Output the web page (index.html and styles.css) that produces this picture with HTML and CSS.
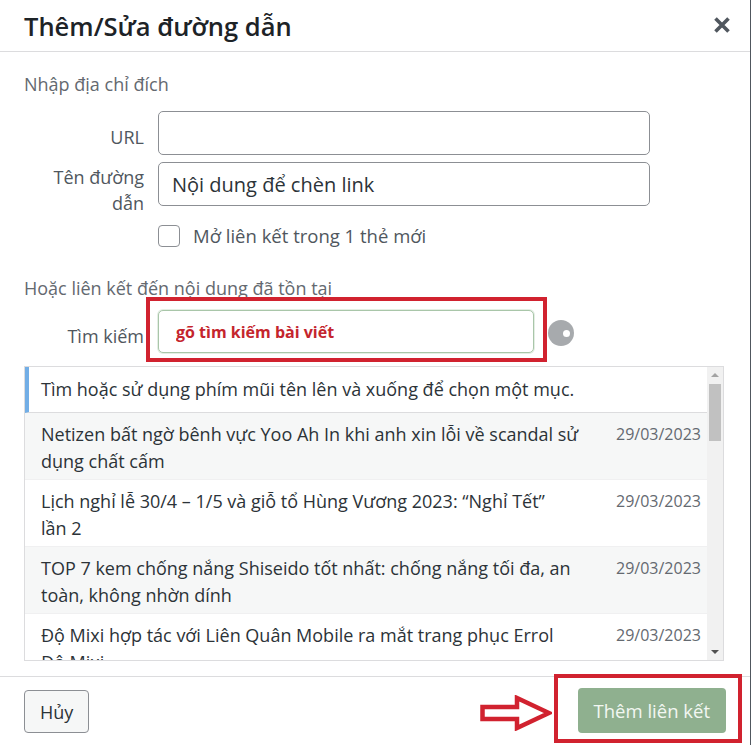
FILE: index.html
```html
<!DOCTYPE html>
<html lang="vi">
<head>
<meta charset="utf-8">
<title>Thêm/Sửa đường dẫn</title>
<link rel="stylesheet" href="styles.css">
</head>
<body>
<div class="modal">
  <header class="modal-head">
    <h1 class="modal-title">Thêm/Sửa đường dẫn</h1>
    <button class="close-btn" aria-label="Đóng">
      <svg width="18" height="18" viewBox="0 0 18 18"><path d="M2.5 2.5 L15.5 15.5 M15.5 2.5 L2.5 15.5" stroke="#50575e" stroke-width="3.6" fill="none"/></svg>
    </button>
  </header>

  <div class="modal-body">
    <p class="section-title first">Nhập địa chỉ đích</p>
    <div class="field-row">
      <label class="field-label">URL</label>
      <input class="text-input" type="text" value="">
    </div>
    <div class="field-row">
      <label class="field-label two-line">Tên đường dẫn</label>
      <input class="text-input" type="text" value="Nội dung để chèn link">
    </div>
    <div class="check-row">
      <span class="checkbox"></span>
      <span class="check-label">Mở liên kết trong 1 thẻ mới</span>
    </div>

    <p class="section-title second">Hoặc liên kết đến nội dung đã tồn tại</p>
    <div class="search-row">
      <label class="field-label search-label">Tìm kiếm</label>
      <div class="search-wrap">
        <input class="text-input search-input" type="text" value="gõ tìm kiếm bài viết">
        <span class="highlight search-highlight"></span>
      </div>
      <span class="spinner"></span>
    </div>

    <div class="results">
      <ul class="result-list">
        <li class="result-info">Tìm hoặc sử dụng phím mũi tên lên và xuống để chọn một mục.</li>
        <li class="result-item alt"><span class="item-title">Netizen bất ngờ bênh vực Yoo Ah In khi anh xin lỗi về scandal sử<br>dụng chất cấm</span><span class="item-date">29/03/2023</span></li>
        <li class="result-item"><span class="item-title">Lịch nghỉ lễ 30/4 – 1/5 và giỗ tổ Hùng Vương 2023: “Nghỉ Tết”<br>lần 2</span><span class="item-date">29/03/2023</span></li>
        <li class="result-item alt"><span class="item-title">TOP 7 kem chống nắng Shiseido tốt nhất: chống nắng tối đa, an<br>toàn, không nhờn dính</span><span class="item-date">29/03/2023</span></li>
        <li class="result-item"><span class="item-title">Độ Mixi hợp tác với Liên Quân Mobile ra mắt trang phục Errol<br>Độ Mixi</span><span class="item-date">29/03/2023</span></li>
      </ul>
      <div class="scrollbar">
        <span class="arrow-up"></span>
        <div class="track"><span class="thumb"></span></div>
        <span class="arrow-down"></span>
      </div>
    </div>
  </div>

  <footer class="modal-foot">
    <button class="btn btn-cancel">Hủy</button>
    <div class="foot-right">
      <svg class="pointer-arrow" width="72" height="36" viewBox="0 0 72 36"><polygon points="2.5,12 37,12 37,3 69,18 37,33 37,24 2.5,24" fill="#fff" stroke="#d1222f" stroke-width="4.5" stroke-linejoin="miter"/></svg>
      <div class="submit-wrap">
        <button class="btn btn-primary">Thêm liên kết</button>
        <span class="highlight submit-highlight"></span>
      </div>
    </div>
  </footer>
</div>
</body>
</html>
```

FILE: styles.css
```css
* { box-sizing: border-box; }

html, body {
  margin: 0;
  padding: 0;
  background: #fff;
}

body {
  font-family: "Open Sans", "Noto Sans", sans-serif;
  color: #2c3338;
  font-size: 18px;
}

.modal {
  width: 751px;
  height: 745px;
  border-right: 1px solid #50575e;
  overflow: hidden;
  background: #fff;
}

.modal-head {
  height: 52px;
  border-bottom: 1px solid #dcdcde;
  display: flex;
  align-items: center;
  justify-content: space-between;
  padding: 0 19px 0 24px;
}

.modal-title {
  margin: 0;
  font-size: 25.5px;
  font-weight: 600;
  line-height: 32px;
  color: #1d2327;
}

.close-btn {
  border: 0;
  background: none;
  padding: 0;
  width: 18px;
  height: 18px;
  margin-top: -1px;
  display: flex;
}

.modal-body {
  padding: 19px 24px 15px 24px;
}

.section-title {
  margin: 0;
  font-size: 18px;
  line-height: 26px;
  color: #646970;
}

.section-title.first { margin-bottom: 14px; }
.section-title.second { margin-top: 26px; margin-bottom: 9px; }

.field-row {
  display: flex;
  gap: 14px;
  margin-bottom: 7px;
}

.field-label {
  width: 120px;
  flex: none;
  text-align: right;
  font-size: 18px;
  line-height: 26px;
  color: #50575e;
  padding-top: 13px;
}

.field-label.two-line {
  padding: 2px 0 0 28px;
}

.text-input {
  width: 492px;
  height: 44px;
  border: 1px solid #8c8f94;
  border-radius: 5px;
  padding: 0 13px;
  font-family: "Open Sans", "Noto Sans", sans-serif;
  font-size: 20px;
  color: #2c3338;
  background: #fff;
  outline: none;
}

.check-row {
  display: flex;
  align-items: center;
  gap: 13px;
  padding-left: 134px;
  margin-top: 1px;
}

.checkbox {
  width: 22px;
  height: 22px;
  border: 1px solid #8c8f94;
  border-radius: 4px;
  background: #fff;
  flex: none;
}

.check-label {
  font-size: 18.5px;
  line-height: 26px;
  color: #50575e;
}

.search-row {
  display: flex;
  align-items: flex-start;
  gap: 14px;
}

.search-label {
  padding-top: 13px;
}

.search-wrap {
  position: relative;
  display: flex;
}

.search-input {
  width: 376px;
  height: 43px;
  border-color: #a9c6a9;
  padding-left: 17px;
  font-size: 16px;
  font-weight: 700;
  color: #c4252d;
  box-shadow: 0 0 0 1px #e4eee4;
}

.highlight {
  position: absolute;
  border: 4px solid #d1222f;
  pointer-events: none;
}

.search-highlight {
  top: -13px;
  left: -12px;
  right: -13px;
  bottom: -9px;
}

.spinner {
  position: relative;
  width: 26px;
  height: 26px;
  border-radius: 50%;
  background: #a7aaad;
  margin-top: 10px;
  flex: none;
}

.spinner::after {
  content: "";
  position: absolute;
  width: 7px;
  height: 7px;
  border-radius: 50%;
  background: #fff;
  right: 4px;
  top: 10px;
}

.results {
  margin-top: 13px;
  width: 700px;
  height: 295px;
  border: 1px solid #dcdcde;
  display: flex;
  overflow: hidden;
}

.result-list {
  list-style: none;
  margin: 0;
  padding: 0;
  flex: 1;
  overflow: hidden;
}

.result-info {
  border-left: 4px solid #72aee6;
  border-bottom: 1px solid #dcdcde;
  padding: 9px 10px 9px 12px;
  line-height: 27px;
  font-size: 18px;
  background: #fff;
}

.result-item {
  display: flex;
  gap: 16px;
  padding: 8px 7px 4px 16px;
  border-bottom: 1px solid #f0f0f1;
  background: #fff;
}

.result-item.alt {
  background: #f6f7f7;
}

.item-title {
  flex: 1;
  line-height: 27px;
  font-size: 18px;
  color: #2c3338;
}

.item-date {
  width: 84px;
  flex: none;
  font-size: 16px;
  line-height: 27px;
  color: #646970;
  text-align: right;
  white-space: nowrap;
}

.scrollbar {
  width: 16px;
  flex: none;
  background: #f1f1f1;
  display: flex;
  flex-direction: column;
  align-items: center;
}

.arrow-up, .arrow-down {
  width: 16px;
  height: 16px;
  flex: none;
  display: flex;
  align-items: center;
  justify-content: center;
}

.arrow-up::before {
  content: "";
  border-left: 4px solid transparent;
  border-right: 4px solid transparent;
  border-bottom: 4px solid #a3a3a3;
}

.arrow-down::before {
  content: "";
  border-left: 4px solid transparent;
  border-right: 4px solid transparent;
  border-top: 4px solid #505050;
}

.track {
  flex: 1;
  width: 16px;
  display: flex;
  justify-content: center;
}

.thumb {
  width: 12px;
  height: 57px;
  margin-top: 1px;
  background: #c1c1c1;
}

.modal-foot {
  border-top: 1px solid #dcdcde;
  height: 68px;
  display: flex;
  align-items: center;
  justify-content: space-between;
  padding: 0 24px;
}

.btn {
  font-family: "Open Sans", "Noto Sans", sans-serif;
  font-size: 18px;
  border-radius: 4px;
  cursor: pointer;
}

.btn-cancel {
  height: 43px;
  padding: 0 15px;
  background: #f6f7f7;
  border: 1px solid #8c8f94;
  color: #2c3338;
  margin-top: 2px;
}

.foot-right {
  display: flex;
  align-items: center;
  gap: 26px;
}

.pointer-arrow {
  display: block;
  margin-top: 4px;
}

.submit-wrap {
  position: relative;
  display: flex;
}

.btn-primary {
  height: 45px;
  padding: 0 16px;
  font-size: 18.5px;
  background: #8fb08f;
  border: 0;
  color: #f2f7f2;
}

.submit-highlight {
  top: -14px;
  left: -24px;
  right: -16px;
  bottom: -10px;
}
```
